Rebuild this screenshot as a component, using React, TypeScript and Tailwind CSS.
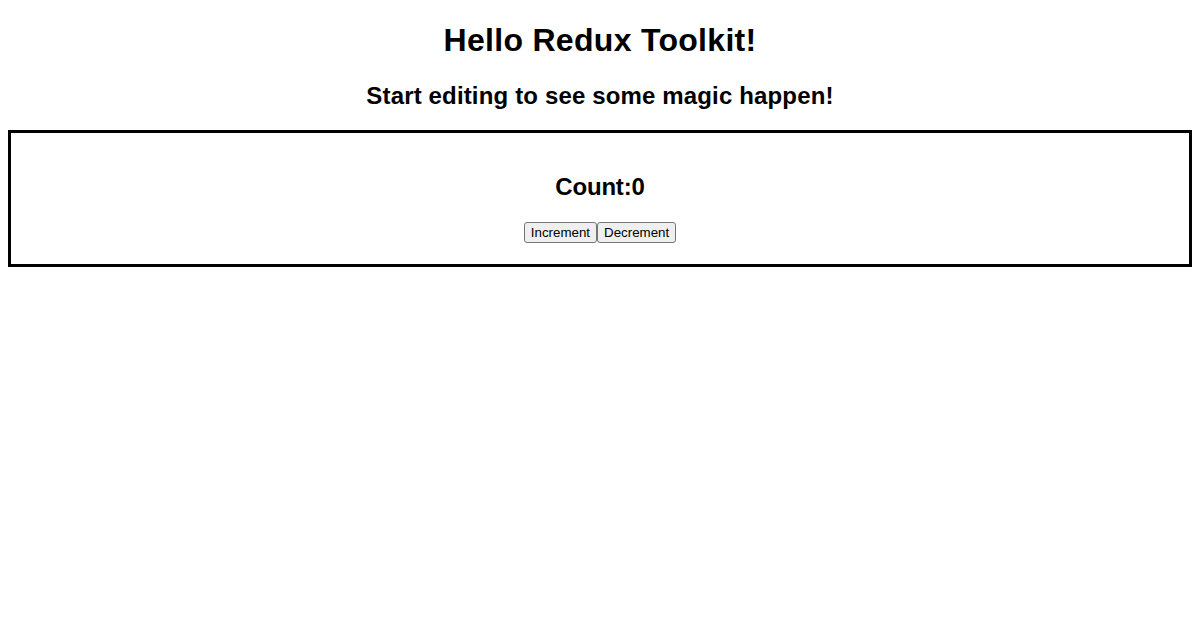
import { useState } from 'react'

const font = "font-['Liberation_Sans',Arial,sans-serif]"

const buttonClass =
  'h-[21px] rounded-[3px] border border-[#767676] bg-[#efefef] px-[6px] text-[13.33px] leading-[normal] text-black'

function Counter() {
  const [count, setCount] = useState(0)

  return (
    <div className="flex flex-col items-center border-[3px] border-black pt-[40px] pb-[21px]">
      <h2 className="text-[24px] font-bold leading-[normal] tracking-[-0.2px]">Count:{count}</h2>
      <div className="mt-[21px] flex">
        <button className={buttonClass} onClick={() => setCount(count + 1)}>
          Increment
        </button>
        <button className={buttonClass} onClick={() => setCount(count - 1)}>
          Decrement
        </button>
      </div>
    </div>
  )
}

export default function App() {
  return (
    <div className={`min-h-[630px] bg-white px-2 pt-[22px] text-black ${font}`}>
      <h1 className="text-center text-[32px] font-bold leading-[normal] tracking-[0.3px]">
        Hello Redux Toolkit!
      </h1>
      <h2 className="mt-[23px] text-center text-[24px] font-bold leading-[normal] tracking-[0.15px]">
        Start editing to see some magic happen!
      </h2>
      <div className="mt-[20px]">
        <Counter />
      </div>
    </div>
  )
}
